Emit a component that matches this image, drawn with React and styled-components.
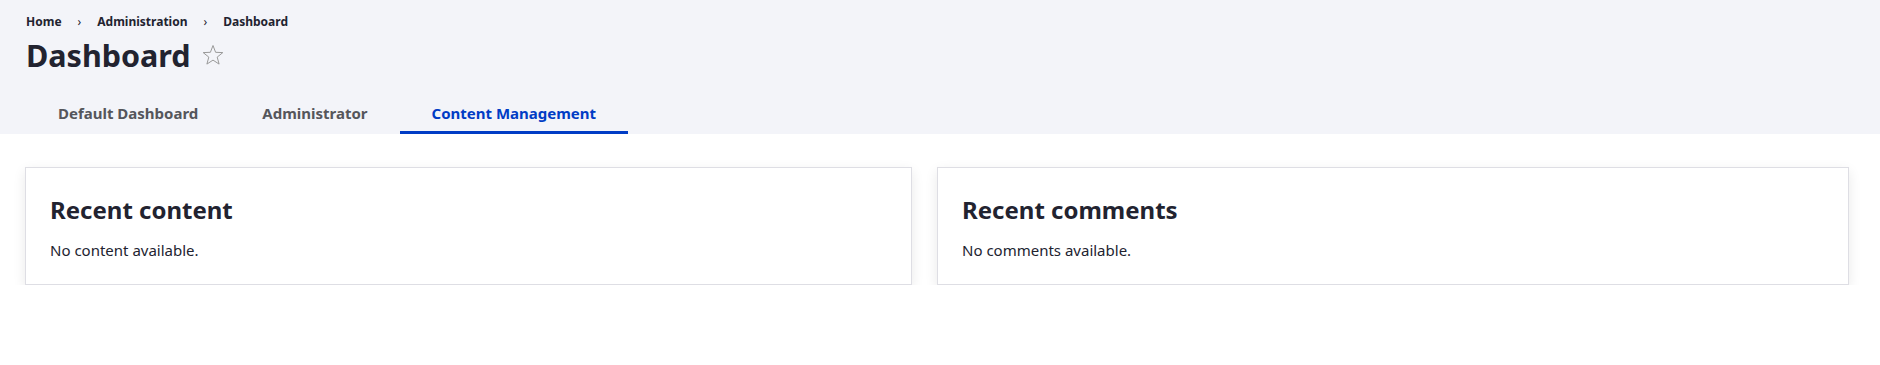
import React from 'react';
import styled, { createGlobalStyle } from 'styled-components';

const GlobalStyle = createGlobalStyle`
  html, body {
    margin: 0;
    padding: 0;
    background: #fff;
    font-family: "Noto Sans", "Open Sans", Arial, sans-serif;
    color: #222330;
  }
`;

const Header = styled.header`
  background: #f3f4f9;
  padding: 0 26px;
  height: 134px;
  display: flex;
  flex-direction: column;
`;

const Breadcrumb = styled.nav`
  display: flex;
  align-items: center;
  padding-top: 13px;
  height: 18px;
  font-size: 12px;
  font-weight: 700;
  line-height: 18px;
`;

const Crumb = styled.a`
  color: #222330;
  text-decoration: none;
`;

const Separator = styled.span`
  padding: 0 16px;
  font-weight: 400;
`;

const TitleRow = styled.div`
  display: flex;
  align-items: center;
  gap: 11px;
  margin-top: 2px;
  height: 44px;
`;

const Title = styled.h1`
  margin: 0;
  font-size: 30.5px;
  font-weight: 700;
  line-height: 44px;
`;

const Tabs = styled.ul`
  display: flex;
  list-style: none;
  margin: auto 0 0;
  padding: 0;
`;

const Tab = styled.li`
  padding: 0 32px;
  height: 40px;
  display: flex;
  align-items: center;
  box-sizing: border-box;
  font-size: 15px;
  font-weight: 700;
  color: ${p => (p.$active ? '#003cc5' : '#55565b')};
  border-bottom: 3px solid ${p => (p.$active ? '#003cc5' : 'transparent')};
`;

const Main = styled.main`
  display: grid;
  grid-template-columns: 887px 912px;
  gap: 25px;
  padding: 33px 0 0 25px;
`;

const Card = styled.section`
  background: #fff;
  border: 1px solid #dedee4;
  box-shadow: 0 4px 12px rgba(0, 0, 0, 0.09);
  height: 118px;
  box-sizing: border-box;
  padding: 26px 24px 0;
`;

const CardTitle = styled.h2`
  margin: 0;
  font-size: 24px;
  font-weight: 700;
  line-height: 32px;
`;

const CardText = styled.p`
  margin: 14px 0 0;
  font-size: 15px;
  line-height: 20px;
`;

const Star = () => (
  <svg width="22" height="22" viewBox="0 0 22 22">
    <polygon
      points="11,1.5 13.6,8.3 20.8,8.6 15.2,13.1 17.1,20.1 11,16.1 4.9,20.1 6.8,13.1 1.2,8.6 8.4,8.3"
      fill="none"
      stroke="#999"
      strokeWidth="1"
      strokeLinejoin="round"
    />
  </svg>
);

const cards = [
  { title: 'Recent content', text: 'No content available.' },
  { title: 'Recent comments', text: 'No comments available.' },
];

export default function App() {
  return (
    <>
      <GlobalStyle />
      <Header>
        <Breadcrumb>
          <Crumb>Home</Crumb>
          <Separator>›</Separator>
          <Crumb>Administration</Crumb>
          <Separator>›</Separator>
          <Crumb>Dashboard</Crumb>
        </Breadcrumb>
        <TitleRow>
          <Title>Dashboard</Title>
          <Star />
        </TitleRow>
        <Tabs>
          <Tab>Default Dashboard</Tab>
          <Tab>Administrator</Tab>
          <Tab $active>Content Management</Tab>
        </Tabs>
      </Header>
      <Main>
        {cards.map(c => (
          <Card key={c.title}>
            <CardTitle>{c.title}</CardTitle>
            <CardText>{c.text}</CardText>
          </Card>
        ))}
      </Main>
    </>
  );
}
